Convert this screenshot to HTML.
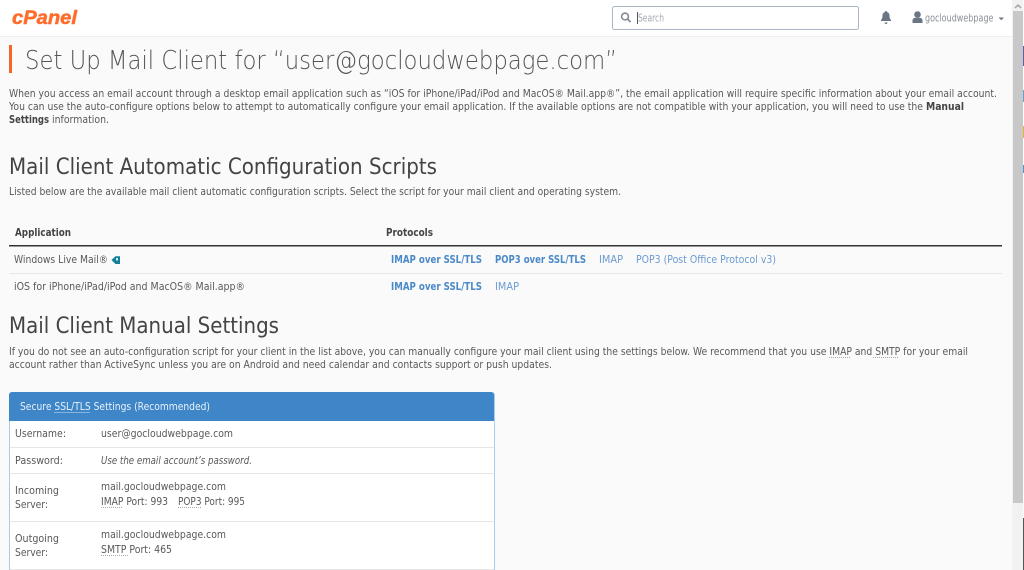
<!DOCTYPE html>
<html><head><meta charset="utf-8"><title>Set Up Mail Client</title>
<style>
html,body{margin:0;padding:0;width:1024px;height:570px;overflow:hidden;background:#fafafa}
svg{display:block}
text{font-family:"DejaVu Sans",sans-serif;font-size:10.8px;fill:#595959;white-space:pre}
.b{font-weight:bold}
.h{fill:#444;font-size:22px}
.l{fill:#6b9bd0}
.lb{fill:#4a89c8;font-weight:bold}
.d{stroke:#aaa;stroke-width:1;stroke-dasharray:1 1;fill:none}
</style></head><body>
<svg width="1024" height="570" viewBox="0 0 1024 570" xmlns="http://www.w3.org/2000/svg">
<rect width="1024" height="570" fill="#fafafa"/>
<!-- top bar -->
<rect width="1013" height="36" fill="#fff"/>
<rect y="36" width="1013" height="1" fill="#eeeef5"/>
<text x="12" y="24" textLength="65" lengthAdjust="spacingAndGlyphs" style="font-family:'Liberation Sans',sans-serif;font-size:19px;font-weight:bold;font-style:italic;fill:#ff6c2c;stroke:#ff6c2c;stroke-width:.5">cPanel</text>
<rect x="612.5" y="6.5" width="246" height="23" rx="2" fill="#fff" stroke="#a9b4c6"/>
<circle cx="625" cy="16.500" r="3.400" fill="none" stroke="#7d8591" stroke-width="1.500"/>
<path d="M627.500 19l3 3" stroke="#7d8591" stroke-width="1.700"/>
<rect x="637" y="12" width="1" height="12" fill="#555"/>
<text x="638" y="21.500" textLength="26" lengthAdjust="spacingAndGlyphs" style="fill:#a3a9b2;font-size:10.500px">Search</text>
<path d="M886 11c.8 0 1.200.5 1.200 1.100 1.600.5 2.300 1.800 2.300 3.400 0 2.500.6 3.600 1.500 4.500v1h-10v-1c.9-.9 1.500-2 1.500-4.500 0-1.600.7-2.900 2.300-3.400 0-.6.400-1.100 1.200-1.100zM884.500 22.500h3c0 .9-.6 1.500-1.500 1.500s-1.500-.6-1.500-1.500z" fill="#6b7684"/>
<circle cx="917.500" cy="14.500" r="3.300" fill="#6b7684"/>
<path d="M912.500 23v-2.500c0-1.800 1.500-2.800 3-2.800h4c1.500 0 3 1 3 2.800v2.500z" fill="#6b7684"/>
<text x="925" y="21.500" textLength="68.500" lengthAdjust="spacingAndGlyphs" style="fill:#8a9099;font-size:10.500px">gocloudwebpage</text>
<path d="M998.500 17.500h5.500l-2.750 2.800z" fill="#6b7684"/>
<!-- heading -->
<rect x="9" y="45" width="3" height="28" fill="#f2682a"/>
<text x="25" y="69" textLength="592" lengthAdjust="spacingAndGlyphs" style="font-size:26px;font-weight:200;fill:#555">Set Up Mail Client for “user@gocloudwebpage.com”</text>
<text x="9" y="97" textLength="988" lengthAdjust="spacingAndGlyphs">When you access an email account through a desktop email application such as “iOS for iPhone/iPad/iPod and MacOS® Mail.app®”, the email application will require specific information about your email account.</text>
<text x="9" y="110" textLength="914" lengthAdjust="spacingAndGlyphs">You can use the auto-configure options below to attempt to automatically configure your email application. If the available options are not compatible with your application, you will need to use the</text>
<text x="926" y="110" textLength="38" lengthAdjust="spacingAndGlyphs" class="b" style="fill:#444">Manual</text>
<text x="9" y="123" textLength="40" lengthAdjust="spacingAndGlyphs" class="b" style="fill:#444">Settings</text>
<text x="52" y="123" textLength="57" lengthAdjust="spacingAndGlyphs">information.</text>
<!-- auto config -->
<text x="9" y="174" textLength="428" lengthAdjust="spacingAndGlyphs" class="h">Mail Client Automatic Configuration Scripts</text>
<text x="9" y="195" textLength="612" lengthAdjust="spacingAndGlyphs">Listed below are the available mail client automatic configuration scripts. Select the script for your mail client and operating system.</text>
<text x="15" y="236" textLength="56" lengthAdjust="spacingAndGlyphs" class="b" style="fill:#444">Application</text>
<text x="386" y="236" textLength="47" lengthAdjust="spacingAndGlyphs" class="b" style="fill:#444">Protocols</text>
<rect x="9" y="245" width="993" height="1.500" fill="#333"/>
<text x="14" y="263" textLength="94" lengthAdjust="spacingAndGlyphs">Windows Live Mail®</text>
<path d="M111.500 260l4-3.800h4.500v7.800h-4.500z" fill="#12809b"/>
<rect x="116" y="258" width="2" height="2.500" fill="#cfe8ee"/>
<text x="391" y="263" textLength="91" lengthAdjust="spacingAndGlyphs" class="lb">IMAP over SSL/TLS</text>
<text x="495" y="263" textLength="91" lengthAdjust="spacingAndGlyphs" class="lb">POP3 over SSL/TLS</text>
<text x="599" y="263" textLength="24" lengthAdjust="spacingAndGlyphs" class="l">IMAP</text>
<text x="636" y="263" textLength="140" lengthAdjust="spacingAndGlyphs" class="l">POP3 (Post Office Protocol v3)</text>
<rect x="9" y="273" width="993" height="1" fill="#e6e6e6"/>
<text x="14" y="290" textLength="231" lengthAdjust="spacingAndGlyphs">iOS for iPhone/iPad/iPod and MacOS® Mail.app®</text>
<text x="391" y="290" textLength="91" lengthAdjust="spacingAndGlyphs" class="lb">IMAP over SSL/TLS</text>
<text x="495" y="290" textLength="24" lengthAdjust="spacingAndGlyphs" class="l">IMAP</text>
<!-- manual -->
<text x="9" y="333" textLength="270" lengthAdjust="spacingAndGlyphs" class="h">Mail Client Manual Settings</text>
<text x="9" y="355" textLength="959" lengthAdjust="spacingAndGlyphs">If you do not see an auto-configuration script for your client in the list above, you can manually configure your mail client using the settings below. We recommend that you use IMAP and SMTP for your email</text>
<path class="d" d="M829 357.500h22M873 357.500h26"/>
<text x="9" y="368" textLength="543" lengthAdjust="spacingAndGlyphs">account rather than ActiveSync unless you are on Android and need calendar and contacts support or push updates.</text>
<!-- panel -->
<path d="M9.500 570V395a2.500 2.500 0 0 1 2.500-2.500h480a2.500 2.500 0 0 1 2.500 2.500V570z" fill="#fff" stroke="#a5cdf0"/>
<path d="M9 421V395a3 3 0 0 1 3-3h479a3 3 0 0 1 3 3v26z" fill="#3e86c7"/>
<text x="20" y="410" textLength="190" lengthAdjust="spacingAndGlyphs" style="fill:#eaf2fa">Secure SSL/TLS Settings (Recommended)</text>
<path d="M54.500 412.500h36" stroke="#cfe2f3" stroke-dasharray="1 1" fill="none"/>
<rect x="10" y="447" width="484" height="1" fill="#e6e6e6"/>
<rect x="10" y="473" width="484" height="1" fill="#e6e6e6"/>
<rect x="10" y="521" width="484" height="1" fill="#e6e6e6"/>
<rect x="10" y="569" width="484" height="1" fill="#e6e6e6"/>
<text x="15" y="437" textLength="51" lengthAdjust="spacingAndGlyphs">Username:</text>
<text x="101" y="437" textLength="132" lengthAdjust="spacingAndGlyphs">user@gocloudwebpage.com</text>
<text x="15" y="464" textLength="48" lengthAdjust="spacingAndGlyphs">Password:</text>
<text x="101" y="464" textLength="151" lengthAdjust="spacingAndGlyphs" style="font-style:italic">Use the email account’s password.</text>
<text x="15" y="494" textLength="44" lengthAdjust="spacingAndGlyphs">Incoming</text>
<text x="15" y="508" textLength="33" lengthAdjust="spacingAndGlyphs">Server:</text>
<text x="101" y="490" textLength="125" lengthAdjust="spacingAndGlyphs">mail.gocloudwebpage.com</text>
<text x="101" y="505" textLength="67" lengthAdjust="spacingAndGlyphs">IMAP Port: 993</text>
<text x="178" y="505" textLength="67" lengthAdjust="spacingAndGlyphs">POP3 Port: 995</text>
<path class="d" d="M101 507.500h22M178 507.500h23"/>
<text x="15" y="542" textLength="44" lengthAdjust="spacingAndGlyphs">Outgoing</text>
<text x="15" y="556" textLength="33" lengthAdjust="spacingAndGlyphs">Server:</text>
<text x="101" y="538" textLength="125" lengthAdjust="spacingAndGlyphs">mail.gocloudwebpage.com</text>
<text x="101" y="553" textLength="71" lengthAdjust="spacingAndGlyphs">SMTP Port: 465</text>
<path class="d" d="M101 555.500h27"/>
<!-- scrollbar -->
<rect x="1012" width="12" height="570" fill="#f1f1f1"/>
<path d="M1015 8l3-3 3 3" fill="none" stroke="#a3a3a3" stroke-width="1.500"/>
<rect x="1013" y="11" width="10" height="492" fill="#c8c8c8"/>
<rect x="1023" width="1" height="570" fill="#fbfbfb"/>
<rect x="1023" y="46" width="1" height="20" fill="#6a5aa8"/>
<rect x="1023" y="90" width="1" height="12" fill="#6c9fd0"/>
<rect x="1023" y="126" width="1" height="12" fill="#e3b53c"/>
<rect x="1023" y="165" width="1" height="8" fill="#4f97d8"/>
<rect x="1023" y="518" width="1" height="52" fill="#555"/>
</svg>
</body></html>
